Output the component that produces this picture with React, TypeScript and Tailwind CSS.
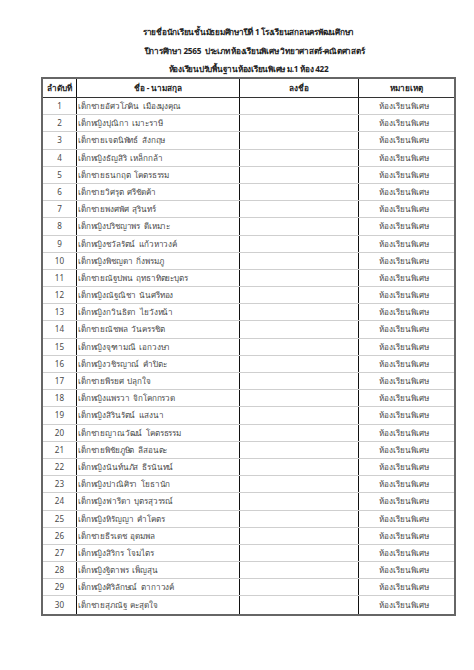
const students = [
  "เด็กชายอัศวโภคิน  เมืองมุงคุณ",
  "เด็กหญิงปุณิกา  เมาะราษี",
  "เด็กชายเจตนิพัทธ์  สังกฤษ",
  "เด็กหญิงธัญสิริ  เหล็กกล้า",
  "เด็กชายธนกฤต  โคตรธรรม",
  "เด็กชายวิศรุต  ศรีชัดค้า",
  "เด็กชายพงศพัศ  สุรินทร์",
  "เด็กหญิงปริชญาพร  ดีเหมาะ",
  "เด็กหญิงชวัลรัตน์  แก้วหาวงค์",
  "เด็กหญิงพิชญดา  กิ่งพรมภู",
  "เด็กชายณัฐปพน  ฤทธาทิตยะบุตร",
  "เด็กหญิงณัฐณิชา  นันศรีทอง",
  "เด็กหญิงกวินธิดา  ไยวังหน้า",
  "เด็กชายณัชพล  วันครรชิต",
  "เด็กหญิงจุฑามณี  เอกวงษา",
  "เด็กหญิงวชิรญาณ์  คำปิตะ",
  "เด็กชายพีรยศ  ปลุกใจ",
  "เด็กหญิงแพรวา  จิกโคกกรวด",
  "เด็กหญิงสิรินรัตน์  แสงนา",
  "เด็กชายญาณวัฒน์  โคตรธรรม",
  "เด็กชายพิชัยภูษิต  ลีสอนตะ",
  "เด็กหญิงนันท์นภัส  ธีรนันทน์",
  "เด็กหญิงปาณิศิรา  โยธานัก",
  "เด็กหญิงฟารีดา  บุตรสุวรรณ์",
  "เด็กหญิงหิรัญญา  คำโคตร",
  "เด็กชายธีรเดช  อุดมพล",
  "เด็กหญิงสิริกร  โจมไตร",
  "เด็กหญิงฐิตาพร  เพ็ญสุน",
  "เด็กหญิงศิริลักษณ์  ตากาวงค์",
  "เด็กชายสุภณัฐ  คะสุดใจ",
];

export default function App() {
  return (
    <div className="min-h-[670px] w-[474px] bg-white font-['Noto_Sans','DejaVu_Sans',sans-serif] text-[#444]">
      <div className="ml-[41px] w-[415px] pt-[22px]">
        <div className="whitespace-pre text-center text-[8.2px] font-bold tracking-[-0.25px] text-[#222]">
          <p className="h-[19px] leading-[19px]">
            รายชื่อนักเรียนชั้นมัธยมศึกษาปีที่ 1 โรงเรียนสกลนครพัฒนศึกษา
          </p>
          <p className="h-[19px] pl-[12px] leading-[19px]">
            {"ปีการศึกษา 2565  ประเภท ห้องเรียนพิเศษ วิทยาศาสตร์-คณิตศาสตร์"}
          </p>
          <p className="h-[17px] leading-[17px]">
            ห้องเรียนปรับพื้นฐานห้องเรียนพิเศษ ม.1 ห้อง 422
          </p>
        </div>

        <div className="border-2 border-[#666]">
          <div className="grid h-[19px] grid-cols-[34px_163px_119px_1fr] border-b border-[#333] text-[8.2px] font-bold text-[#222]">
            <div className="flex items-center justify-center border-r border-[#111] tracking-[-0.2px]">
              ลำดับที่
            </div>
            <div className="flex items-center justify-center border-r border-[#111]">
              ชื่อ - นามสกุล
            </div>
            <div className="flex items-center justify-center border-r border-[#111]">
              ลงชื่อ
            </div>
            <div className="flex items-center justify-center">หมายเหตุ</div>
          </div>

          {students.map((name, i) => (
            <div
              className="grid h-[17.2px] grid-cols-[34px_163px_119px_1fr] border-b border-[#cfcfcf] text-[8.1px] text-[#4a4a4a] last:border-b-0"
              key={name}
            >
              <div className="flex items-center justify-center border-r border-[#111]">
                {i + 1}
              </div>
              <div className="flex items-center whitespace-pre border-r border-[#111] pl-[1px] tracking-[-0.15px]">
                {name}
              </div>
              <div className="border-r border-[#111]" />
              <div className="flex items-center justify-center pr-[6px]">
                ห้องเรียนพิเศษ
              </div>
            </div>
          ))}
        </div>
      </div>
    </div>
  );
}
